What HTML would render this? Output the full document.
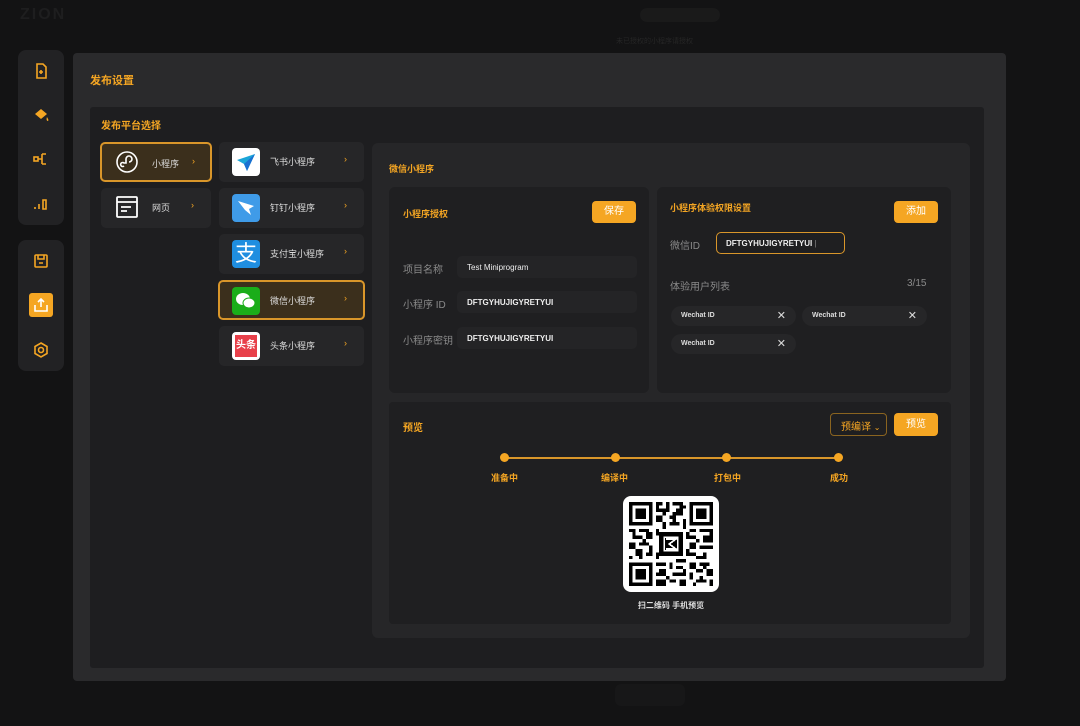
<!DOCTYPE html>
<html><head><meta charset="utf-8"><style>
*{margin:0;padding:0;box-sizing:border-box}
body{width:1080px;height:726px;background:#131314;font-family:"Liberation Sans","Noto Sans CJK SC",sans-serif;position:relative;overflow:hidden;color:#ddd}
.abs{position:absolute}
.or{color:#f5a623}
.side{background:#222224;border-radius:8px;left:18px;width:46px}
.si{position:absolute;left:14px;width:18px;height:18px}
.card{background:#262628;border-radius:6px}
.item{position:absolute;background:#262628;border-radius:5px;height:40px;font-size:9px;color:#ddd}
.item.sel{background:#3b2f1c;border:2px solid #d9962a}
.item .t{position:absolute;top:13px}
.item .ch{position:absolute;top:12px;color:#f5a623;font-size:9px}
.ic{position:absolute;left:13px;top:6px;width:28px;height:28px;border-radius:4px}
.field{position:absolute;background:#242426;border-radius:5px;height:22px;font-size:8px;font-weight:bold;color:#eee;padding:7px 10px}
.lbl{position:absolute;font-size:10px;color:#8a8a8a}
.btn{position:absolute;background:#f5a623;color:#fff;border-radius:4px;font-size:10px;text-align:center;line-height:22px;height:22px;width:44px}
.chip{position:absolute;background:#262628;border-radius:10px;height:20px;width:125px;font-size:7px;font-weight:bold;color:#ddd;padding:6px 10px}
.chip span{position:absolute;right:10px;top:3px;font-size:11px;font-weight:normal}
.dot{position:absolute;width:9px;height:9px;border-radius:50%;background:#f5a623;top:453px}
.st{position:absolute;top:471px;font-size:9px;color:#f5a623;font-weight:bold}
</style></head><body>
<div class="abs" style="left:20px;top:6px;font-size:16px;color:#1e1e1f;font-weight:bold;letter-spacing:2px">ZION</div>
<div class="abs" style="left:640px;top:8px;width:80px;height:14px;border-radius:7px;background:#1a1a1a"></div>
<div class="abs" style="left:616px;top:36px;font-size:7px;color:#262626">未已授权的小程序请授权</div>
<div class="abs" style="left:615px;top:684px;width:70px;height:22px;border-radius:6px;background:#171718"></div>

<div class="abs side" style="top:50px;height:175px">
 <svg class="si" style="top:12px" viewBox="0 0 18 18" fill="none" stroke="#f5a623" stroke-width="1.6"><path d="M5 2h6l3 3v11H5z"/><path d="M9 8v4M7 10h4"/></svg>
 <svg class="si" style="top:56px" viewBox="0 0 18 18" fill="#f5a623"><path d="M3 8l6-5 6 5-6 5z"/><path d="M15 11c1 2 2 3 1 4-1 0-2-1-1-4z"/></svg>
 <svg class="si" style="top:100px" viewBox="0 0 18 18" fill="none" stroke="#f5a623" stroke-width="1.6"><rect x="2" y="7" width="4" height="4"/><path d="M6 9h4M10 4v10M10 4h4M10 14h4"/></svg>
 <svg class="si" style="top:144px" viewBox="0 0 18 18" fill="none" stroke="#f5a623" stroke-width="1.6"><path d="M3 15v-2M7 15v-5M11 15V6h3v9z"/></svg>
</div>
<div class="abs side" style="top:240px;height:131px">
 <svg class="si" style="top:12px" viewBox="0 0 18 18" fill="none" stroke="#f5a623" stroke-width="1.6"><rect x="3" y="3" width="12" height="12" rx="1"/><path d="M6 3v4h6V3M7 11h4"/></svg>
 <div class="abs" style="left:11px;top:53px;width:24px;height:24px;background:#f5a623;border-radius:3px"></div>
 <svg class="si" style="top:56px;left:14px" viewBox="0 0 18 18" fill="none" stroke="#fff" stroke-width="1.6"><path d="M9 11V3M6 6l3-3 3 3M3 9v6h12V9"/></svg>
 <svg class="si" style="top:101px" viewBox="0 0 18 18" fill="none" stroke="#f5a623" stroke-width="1.6"><path d="M9 2l6 3.5v7L9 16l-6-3.5v-7z"/><circle cx="9" cy="9" r="2.5"/></svg>
</div>

<div class="abs" style="left:73px;top:53px;width:933px;height:628px;background:#2a2a2c;border-radius:4px"></div>
<div class="abs or" style="left:90px;top:72px;font-size:11px;font-weight:bold">发布设置</div>
<div class="abs" style="left:90px;top:107px;width:894px;height:561px;background:#1e1e20;border-radius:3px"></div>
<div class="abs or" style="left:101px;top:117px;font-size:10px;font-weight:bold">发布平台选择</div>

<div class="item sel" style="left:100px;top:142px;width:112px">
 <svg class="abs" style="left:14px;top:7px" width="22" height="22" viewBox="0 0 22 22" fill="none" stroke="#fff" stroke-width="1.6"><circle cx="11" cy="11" r="10"/><path d="M8 15a2 2 0 1 1 0-3h2V8a3 3 0 1 1 3 3"/></svg>
 <span class="t" style="left:50px">小程序</span><span class="ch" style="left:90px">›</span></div>
<div class="item" style="left:101px;top:188px;width:110px">
 <svg class="abs" style="left:15px;top:8px" width="22" height="22" viewBox="0 0 22 22" fill="none" stroke="#fff" stroke-width="1.8"><rect x="1" y="1" width="20" height="20" rx="1"/><path d="M1 6h20M5 11h10M5 15h6"/></svg>
 <span class="t" style="left:51px">网页</span><span class="ch" style="left:90px">›</span></div>

<div class="item" style="left:219px;top:142px;width:145px"><div class="ic" style="background:#fff"><svg width="28" height="28" viewBox="0 0 28 28"><path d="M5 12l18-6-8 17-3-7z" fill="#1ba5d8"/><path d="M12 16l11-10-8 17z" fill="#1a6fd1"/></svg></div><span class="t" style="left:51px">飞书小程序</span><span class="ch" style="left:125px">›</span></div>
<div class="item" style="left:219px;top:188px;width:145px"><div class="ic" style="background:#3f9be8"><svg width="28" height="28" viewBox="0 0 28 28"><path d="M6 7l16 5-5 3 2 6-6-5z" fill="#fff"/></svg></div><span class="t" style="left:51px">钉钉小程序</span><span class="ch" style="left:125px">›</span></div>
<div class="item" style="left:219px;top:234px;width:145px"><div class="ic" style="background:#1f8ee0;color:#fff;font-size:22px;line-height:28px;text-align:center">支</div><span class="t" style="left:51px">支付宝小程序</span><span class="ch" style="left:125px">›</span></div>
<div class="item sel" style="left:218px;top:280px;width:147px"><div class="ic" style="background:#1aad19;left:12px;top:5px"><svg width="28" height="28" viewBox="0 0 28 28"><ellipse cx="11" cy="12" rx="7" ry="6" fill="#fff"/><ellipse cx="17" cy="16" rx="6" ry="5" fill="#fff" stroke="#1aad19"/></svg></div><span class="t" style="left:50px;top:12px">微信小程序</span><span class="ch" style="left:124px;top:11px">›</span></div>
<div class="item" style="left:219px;top:326px;width:145px"><div class="ic" style="background:#fff;padding:3px"><div style="background:#e8404a;color:#fff;font-size:10px;font-weight:bold;line-height:22px;text-align:center;height:22px">头条</div></div><span class="t" style="left:51px">头条小程序</span><span class="ch" style="left:125px">›</span></div>

<div class="abs card" style="left:372px;top:143px;width:598px;height:495px"></div>
<div class="abs or" style="left:389px;top:162px;font-size:9px;font-weight:bold">微信小程序</div>

<div class="abs" style="left:389px;top:187px;width:260px;height:206px;background:#1f1f21;border-radius:6px"></div>
<div class="abs or" style="left:403px;top:207px;font-size:9px;font-weight:bold">小程序授权</div>
<div class="btn" style="left:592px;top:201px">保存</div>
<div class="lbl" style="left:403px;top:261px">项目名称</div><div class="field" style="left:457px;top:256px;width:180px;font-weight:normal">Test Miniprogram</div>
<div class="lbl" style="left:403px;top:296px">小程序 ID</div><div class="field" style="left:457px;top:291px;width:180px">DFTGYHUJIGYRETYUI</div>
<div class="lbl" style="left:403px;top:332px">小程序密钥</div><div class="field" style="left:457px;top:327px;width:180px">DFTGYHUJIGYRETYUI</div>

<div class="abs" style="left:657px;top:187px;width:294px;height:206px;background:#1f1f21;border-radius:6px"></div>
<div class="abs or" style="left:670px;top:201px;font-size:9px;font-weight:bold">小程序体验权限设置</div>
<div class="btn" style="left:894px;top:201px">添加</div>
<div class="lbl" style="left:670px;top:237px">微信ID</div>
<div class="field" style="left:716px;top:232px;width:129px;border:1.5px solid #d9962a;background:#1f1f21;padding:6px 9px">DFTGYHUJIGYRETYUI <span style="color:#888;font-weight:normal">|</span></div>
<div class="lbl" style="left:670px;top:278px">体验用户列表</div>
<div class="lbl" style="left:907px;top:278px">3/15</div>
<div class="chip" style="left:671px;top:306px">Wechat ID<span>✕</span></div>
<div class="chip" style="left:802px;top:306px">Wechat ID<span>✕</span></div>
<div class="chip" style="left:671px;top:334px">Wechat ID<span>✕</span></div>

<div class="abs" style="left:389px;top:402px;width:562px;height:222px;background:#1f1f21;border-radius:4px"></div>
<div class="abs or" style="left:403px;top:419px;font-size:10px;font-weight:bold">预览</div>
<div class="abs" style="left:830px;top:413px;width:57px;height:23px;border:1.5px solid #8a6420;border-radius:4px;font-size:10px;color:#f5a623;padding:4px 0 0 10px">预编译 <span style="font-size:8px">⌄</span></div>
<div class="btn" style="left:894px;top:413px;height:23px;line-height:23px">预览</div>
<div class="abs" style="left:505px;top:457px;width:333px;height:1.5px;background:#d9962a"></div>
<div class="dot" style="left:500px"></div><div class="dot" style="left:611px"></div><div class="dot" style="left:722px"></div><div class="dot" style="left:834px"></div>
<div class="st" style="left:491px">准备中</div><div class="st" style="left:601px">编译中</div><div class="st" style="left:714px">打包中</div><div class="st" style="left:830px">成功</div>

<div class="abs" style="left:623px;top:496px;width:96px;height:96px;background:#fff;border-radius:8px;padding:6px">
<svg width="84" height="84" viewBox="0 0 25 25" shape-rendering="crispEdges">
<g fill="#000">
<path d="M0 0h7v7h-7zM1 1v5h5v-5zM2 2h3v3h-3z" fill-rule="evenodd"/>
<path d="M18 0h7v7h-7zM19 1v5h5v-5zM20 2h3v3h-3z" fill-rule="evenodd"/>
<path d="M0 18h7v7h-7zM1 19v5h5v-5zM2 20h3v3h-3z" fill-rule="evenodd"/>
<path d="M8 0h2v1h-2zM11 0h1v2h-1zM13 0h3v1h-3zM9 2h3v1h-3zM14 2h2v2h-2zM8 4h2v2h-2zM12 4h2v1h-2zM10 6h1v2h-1zM12 6h3v1h-3zM16 5h1v3h-1zM8 1h1v2h-1zM15 1h2v1h-2zM10 3h1v1h-1zM13 3h1v3h-1z"/>
<path d="M0 8h2v1h-2zM3 8h3v1h-3zM8 8h1v2h-1zM18 8h2v1h-2zM21 8h4v1h-4zM1 10h3v1h-3zM5 9h2v2h-2zM17 10h3v1h-3zM22 10h2v2h-2zM0 12h2v2h-2zM3 12h3v1h-3zM18 12h2v2h-2zM21 13h4v1h-4zM2 14h2v2h-2zM5 15h2v1h-2zM17 15h3v1h-3zM22 15h1v2h-1zM0 16h1v1h-1zM8 15h1v2h-1zM1 9h1v1h-1zM4 11h1v1h-1zM6 13h1v2h-1zM17 9h1v1h-1zM20 11h1v1h-1zM24 9h1v3h-1zM17 14h1v1h-1zM20 16h2v1h-2zM3 16h1v1h-1z"/>
<path d="M8 18h3v1h-3zM12 18h1v2h-1zM14 17h3v1h-3zM18 18h2v2h-2zM21 18h3v1h-3zM9 20h2v2h-2zM13 21h4v1h-4zM18 21h1v2h-1zM20 20h2v1h-2zM23 20h2v2h-2zM8 23h3v2h-3zM12 23h2v1h-2zM15 23h2v2h-2zM20 23h3v1h-3zM19 24h1v1h-1zM24 23h1v2h-1zM8 21h1v1h-1zM11 22h1v1h-1zM14 19h2v1h-2zM16 20h1v1h-1zM21 22h1v1h-1zM22 19h1v1h-1z"/>
<path d="M9 9h7v7h-7z"/>
</g>
<path d="M10.5 10.5h4v4h-4z" fill="none" stroke="#fff" stroke-width=".5"/>
<path d="M11 11h3l-2 1.5 2 1.5h-3" fill="none" stroke="#fff" stroke-width=".5"/>
</svg></div>
<div class="abs" style="left:623px;top:600px;width:96px;text-align:center;font-size:8px;color:#ddd;font-weight:bold">扫二维码 手机预览</div>
</body></html>
